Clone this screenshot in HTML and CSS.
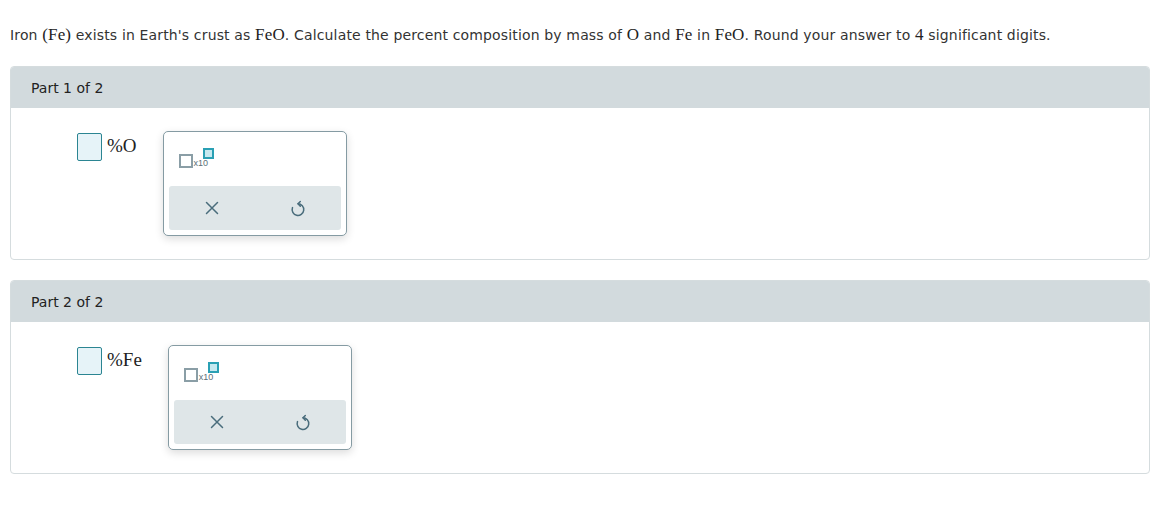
FILE: index.html
```html
<!DOCTYPE html>
<html lang="en">
<head>
    <meta charset="UTF-8">
    <title>Percent composition</title>
    <link rel="stylesheet" href="styles.css">
</head>
<body>
    <p class="question">
        Iron <span class="math">(Fe)</span> exists in Earth's crust as <span class="math">FeO</span>. Calculate the percent composition by mass of <span class="math">O</span> and <span class="math">Fe</span> in <span class="math">FeO</span>. Round your answer to <span class="math">4</span> significant digits.
    </p>

    <div class="part">
        <div class="part-head">Part 1 of 2</div>
        <div class="part-body">
            <div class="answer">
                <span class="answer-box"></span>
                <span class="unit">%O</span>
            </div>
            <div class="pad">
                <div class="pad-keys">
                    <span class="sci">
                        <span class="sci-base"></span>
                        <span class="sci-ten">x10</span>
                        <span class="sci-exp"></span>
                    </span>
                </div>
                <div class="pad-bar">
                    <button class="pad-btn" title="Clear">
                        <svg width="14" height="14" viewBox="0 0 14 14"><path d="M1.5 1.5 L12.5 12.5 M12.5 1.5 L1.5 12.5" /></svg>
                    </button>
                    <button class="pad-btn" title="Undo">
                        <svg width="16" height="17" viewBox="0 0 16 17"><path d="M8 3.8 A5.8 5.8 0 1 1 2.5 7.6" /><path d="M10.3 1.5 L8 3.8 L10.3 6.1" /></svg>
                    </button>
                </div>
            </div>
        </div>
    </div>

    <div class="part">
        <div class="part-head">Part 2 of 2</div>
        <div class="part-body">
            <div class="answer">
                <span class="answer-box"></span>
                <span class="unit">%Fe</span>
            </div>
            <div class="pad">
                <div class="pad-keys">
                    <span class="sci">
                        <span class="sci-base"></span>
                        <span class="sci-ten">x10</span>
                        <span class="sci-exp"></span>
                    </span>
                </div>
                <div class="pad-bar">
                    <button class="pad-btn" title="Clear">
                        <svg width="14" height="14" viewBox="0 0 14 14"><path d="M1.5 1.5 L12.5 12.5 M12.5 1.5 L1.5 12.5" /></svg>
                    </button>
                    <button class="pad-btn" title="Undo">
                        <svg width="16" height="17" viewBox="0 0 16 17"><path d="M8 3.8 A5.8 5.8 0 1 1 2.5 7.6" /><path d="M10.3 1.5 L8 3.8 L10.3 6.1" /></svg>
                    </button>
                </div>
            </div>
        </div>
    </div>
</body>
</html>
```

FILE: styles.css
```css
*{
    box-sizing: border-box;
}
body{
    margin: 0;
    padding: 0 19px 0 10px;
    font-family: "DejaVu Sans", Verdana, sans-serif;
    font-size: 14px;
    color: #333;
    background: #fff;
}
.question{
    margin: 0;
    padding-top: 25px;
    line-height: 20px;
    height: 66px;
    letter-spacing: 0.15px;
}
.math{
    font-family: "Liberation Serif", "Times New Roman", serif;
    font-size: 17px;
    color: #222;
}
.part{
    border: 1px solid #d5dcde;
    border-radius: 4px;
    margin-bottom: 20px;
    overflow: hidden;
}
.part-head{
    background: #d2dadd;
    height: 41px;
    line-height: 43px;
    padding-left: 20px;
    color: #222;
}
.part-body{
    display: flex;
    align-items: flex-start;
    padding: 23px 0 23px 66px;
}
.answer{
    display: flex;
    align-items: flex-start;
    margin-top: 2px;
}
.answer-box{
    width: 25px;
    height: 28px;
    border: 1px solid #2b8592;
    border-radius: 2px;
    background: #e6f3f8;
}
.unit{
    font-family: "Liberation Serif", "Times New Roman", serif;
    font-size: 19px;
    color: #222;
    margin: 2px 0 0 5px;
}
.pad{
    margin-left: 26px;
    width: 184px;
    height: 105px;
    border: 1px solid #859ba3;
    border-radius: 5px;
    background: #fff;
    box-shadow: 0 3px 8px rgba(0, 0, 0, 0.14);
    padding: 0 5px 5px;
    display: flex;
    flex-direction: column;
}
.pad-keys{
    height: 54px;
    padding: 16px 0 0 10px;
}
.sci{
    position: relative;
    display: inline-block;
    width: 40px;
    height: 22px;
}
.sci-base{
    position: absolute;
    left: 0;
    top: 6px;
    width: 14px;
    height: 14px;
    border: 2px solid #8a9ea6;
    background: #fff;
}
.sci-ten{
    position: absolute;
    left: 15px;
    top: 10px;
    font-family: "Liberation Sans", Arial, sans-serif;
    font-size: 9px;
    color: #5b6f78;
}
.sci-exp{
    position: absolute;
    left: 24px;
    top: 0;
    width: 11px;
    height: 11px;
    border: 2px solid #2aa0b4;
    background: #c6e9f0;
}
.pad-bar{
    flex: 1;
    display: flex;
    background: #dfe6e8;
    border-radius: 3px;
}
.pad-btn{
    flex: 1;
    border: none;
    background: none;
    display: flex;
    align-items: center;
    justify-content: center;
    padding: 0;
    cursor: pointer;
}
.pad-btn svg{
    fill: none;
    stroke: #4a6d7c;
    stroke-width: 1.5;
    stroke-linecap: round;
    stroke-linejoin: round;
}
```
